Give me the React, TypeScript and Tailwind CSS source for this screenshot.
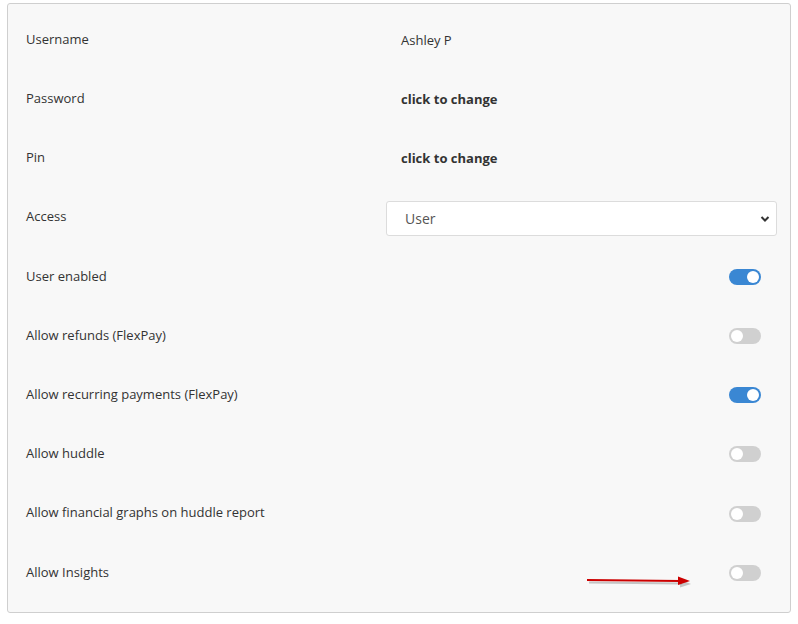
import React from "react";

type Row =
  | { label: string; kind: "text"; value: string; bold?: boolean }
  | { label: string; kind: "select"; value: string }
  | { label: string; kind: "toggle"; on: boolean };

const rows: Row[] = [
  { label: "Username", kind: "text", value: "Ashley P" },
  { label: "Password", kind: "text", value: "click to change", bold: true },
  { label: "Pin", kind: "text", value: "click to change", bold: true },
  { label: "Access", kind: "select", value: "User" },
  { label: "User enabled", kind: "toggle", on: true },
  { label: "Allow refunds (FlexPay)", kind: "toggle", on: false },
  { label: "Allow recurring payments (FlexPay)", kind: "toggle", on: true },
  { label: "Allow huddle", kind: "toggle", on: false },
  { label: "Allow financial graphs on huddle report", kind: "toggle", on: false },
  { label: "Allow Insights", kind: "toggle", on: false },
];

function Toggle({ on }: { on: boolean }) {
  return (
    <div
      className={
        on
          ? "w-[32px] h-[16px] rounded-full bg-[#3a87d3] flex items-center justify-end px-[2px]"
          : "w-[32px] h-[16px] rounded-full bg-[#d0d0d0] flex items-center justify-start px-[2px]"
      }
    >
      <div className="w-[12px] h-[12px] rounded-full bg-white" />
    </div>
  );
}

export default function App() {
  return (
    <div className="w-[798px] h-[624px] bg-white pt-[3px] pl-[7px] font-['Open_Sans',sans-serif] text-[13px] text-[#333]">
      <div className="relative w-[784px] h-[610px] border border-[#cfcfcf] rounded-[3px] bg-[#f8f8f8] pt-[6px]">
        {rows.map((r) => (
          <div key={r.label} className="grid grid-cols-[378px_1fr] h-[59.2px] items-center">
            <div className="pl-[18px]">{r.label}</div>
            <div className="pr-[13px]">
              {r.kind === "text" && (
                <div className={r.bold ? "pl-[15px] mt-[2px] font-bold" : "pl-[15px] mt-[3px]"}>{r.value}</div>
              )}
              {r.kind === "select" && (
                <div className="h-[35px] mt-[3px] bg-white border border-[#dcdcdc] rounded-[3px] flex items-center justify-between pl-[18px] pr-[6px] text-[#555] text-[14px]">
                  <span>{r.value}</span>
                  <svg width="10" height="8" viewBox="0 0 10 8">
                    <path d="M1.5 2 L5 5.5 L8.5 2" fill="none" stroke="#333" strokeWidth="2" />
                  </svg>
                </div>
              )}
              {r.kind === "toggle" && (
                <div className="flex justify-end pr-[16px] mt-[1px]">
                  <Toggle on={r.on} />
                </div>
              )}
            </div>
          </div>
        ))}
        <svg
          className="absolute left-[578px] top-[570px]"
          width="110"
          height="16"
          viewBox="0 0 110 16"
        >
          <path d="M3 8.5 L96 9.5" stroke="#888" strokeWidth="2" opacity="0.45" />
          <path d="M94 5.5 L105 10 L94 13.5 Z" fill="#888" opacity="0.45" />
          <path d="M1 6 L94 7" stroke="#cc0000" strokeWidth="2" />
          <path d="M92 2.5 L104 7 L92 11 Z" fill="#cc0000" />
        </svg>
      </div>
    </div>
  );
}
